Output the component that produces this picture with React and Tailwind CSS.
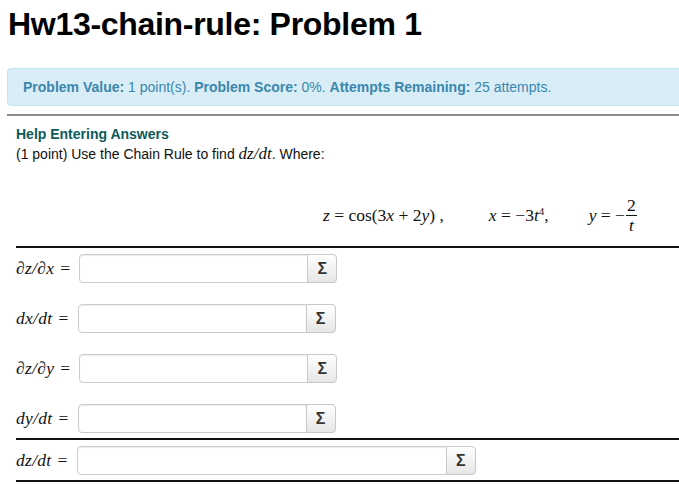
import React from "react";

const serif = { fontFamily: '"Liberation Serif", "DejaVu Serif", serif' };

function Sigma() {
    return (
        <div className="w-[30px] h-[29px] -ml-px flex items-center justify-center rounded-r-[4px] border border-[#c8c8c8] bg-gradient-to-b from-[#ffffff] to-[#e6e6e6] text-[16px] font-bold text-[#333]">
            Σ
        </div>
    );
}

function AnswerRow({ label, width = "w-[229px]", className = "" }) {
    return (
        <div className={`flex items-center ${className}`}>
            <div className="mr-[9px] flex items-center text-[17.5px] italic tracking-[0.3px] text-[#111] whitespace-nowrap" style={serif}>
                {label}
                <span className="ml-[6px] not-italic">=</span>
            </div>
            <div className={`${width} h-[29px] rounded-l-[4px] border border-[#cccccc] bg-white shadow-[inset_0_1px_1px_rgba(0,0,0,0.075)]`} />
            <Sigma />
        </div>
    );
}

export default function App() {
    return (
        <div className="w-[679px] h-[485px] overflow-hidden bg-white text-[#111]" style={{ fontFamily: '"Liberation Sans", Arial, sans-serif' }}>
            <h1 className="pl-[8px] pt-[4px] text-[32px] font-bold leading-[40px] tracking-[-0.3px] text-black">
                Hw13-chain-rule: Problem 1
            </h1>
            <div className="ml-[7px] mt-[24px] -mr-[4px] h-[38px] rounded-[4px] border border-[#bce8f1] bg-[#d9edf7] pl-[15px] flex items-center text-[14px] text-[#3a87ad]">
                <span className="font-bold">Problem Value:</span>
                <span>&nbsp;1 point(s).&nbsp;</span>
                <span className="font-bold">Problem Score:</span>
                <span>&nbsp;0%.&nbsp;</span>
                <span className="font-bold">Attempts Remaining:</span>
                <span>&nbsp;25 attempts.</span>
            </div>
            <div className="ml-[7px] mt-[8px] h-[2px] bg-[#8a8a8a]" />
            <div className="pl-[16px] pt-[8px]">
                <div className="text-[14px] font-bold text-[#0c5a5a] leading-[20px]">Help Entering Answers</div>
                <div className="text-[14px] leading-[20px] text-[#111]">
                    (1 point) Use the Chain Rule to find{" "}
                    <span className="italic text-[17px]" style={serif}>dz/dt</span>. Where:
                </div>
                <div className="mt-[31px] h-[40px] flex items-center text-[17.5px] text-[#111]" style={serif}>
                    <div className="ml-[307px] whitespace-nowrap">
                        <i>z</i> = cos(3<i>x</i> + 2<i>y</i>) ,
                    </div>
                    <div className="ml-[45px] whitespace-nowrap">
                        <i>x</i> = −3<i>t</i><sup className="text-[11px]">4</sup>,
                    </div>
                    <div className="ml-[40px] flex items-center whitespace-nowrap">
                        <i>y</i>&nbsp;=&nbsp;−
                        <div className="ml-[1px] flex flex-col items-center gap-[2px] leading-[15px]">
                            <span className="px-[1px]">2</span>
                            <span className="h-px w-[11px] bg-[#111]" />
                            <i>t</i>
                        </div>
                    </div>
                </div>
                <div className="mt-[11px] h-[2px] bg-[#111]" />
                <AnswerRow label="∂z/∂x" className="mt-[6px]" />
                <AnswerRow label="dx/dt" className="mt-[21px]" />
                <AnswerRow label="∂z/∂y" className="mt-[21px]" />
                <AnswerRow label="dy/dt" className="mt-[21px]" />
                <div className="mt-[5px] h-[2px] bg-[#111]" />
                <AnswerRow label="dz/dt" width="w-[370px]" className="mt-[6px]" />
                <div className="mt-[5px] h-[2px] bg-[#111]" />
            </div>
        </div>
    );
}
